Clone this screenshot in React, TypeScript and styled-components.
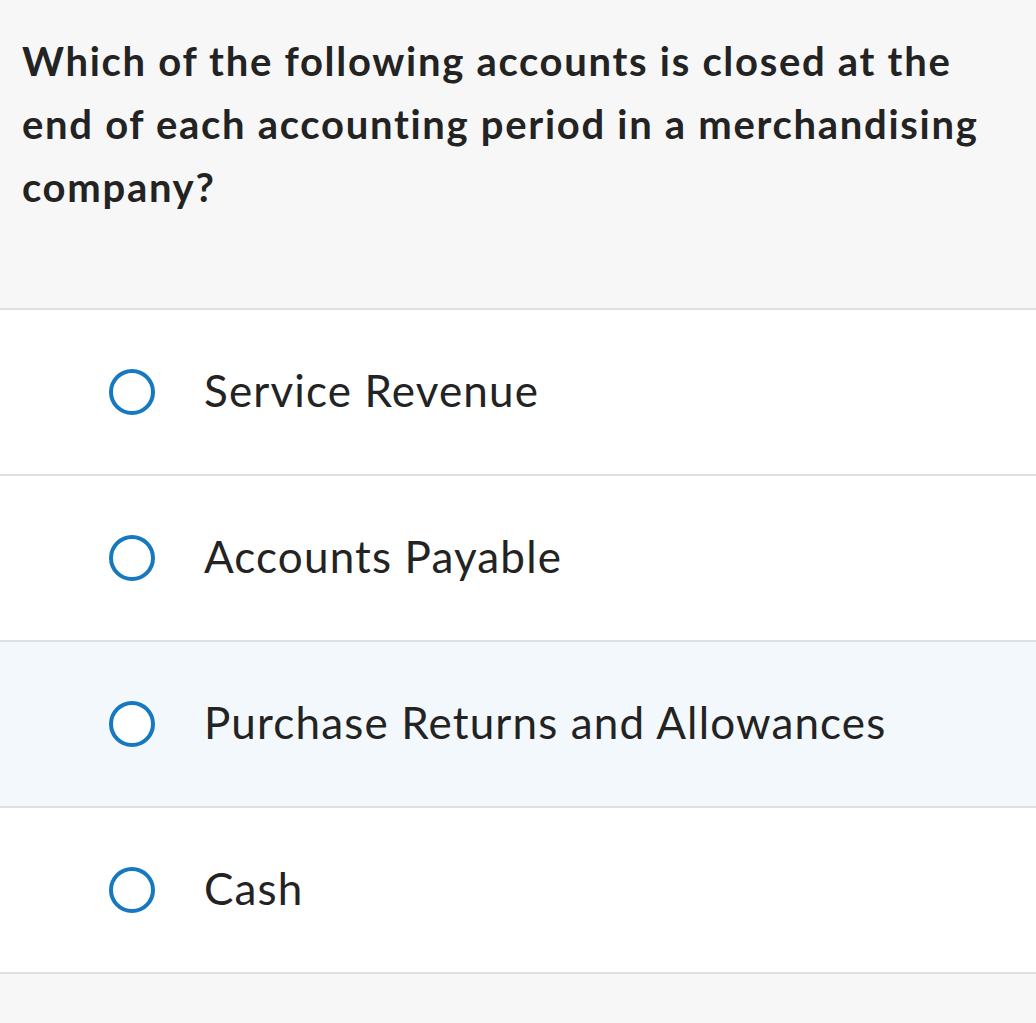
import React from "react";
import styled, { createGlobalStyle } from "styled-components";

const GlobalStyle = createGlobalStyle`
  html, body { margin: 0; padding: 0; background: #f7f7f7; }
  body { font-family: Lato, "Open Sans", sans-serif; color: #232323; }
`;

const Page = styled.div`
  width: 1036px;
  min-height: 1023px;
  background: #f7f7f7;
  display: flex;
  flex-direction: column;
`;

const Question = styled.h1`
  margin: 0;
  box-sizing: border-box;
  height: 308px;
  padding: 30px 28px 0 22px;
  font-size: 40px;
  font-weight: 700;
  line-height: 63px;
  letter-spacing: 1.7px;
  color: #232323;
`;

const Options = styled.ul`
  list-style: none;
  margin: 0;
  padding: 0;
  border-bottom: 2px solid #dedee3;
`;

const Option = styled.li<{ $highlight?: boolean }>`
  box-sizing: border-box;
  height: 166px;
  border-top: 2px solid #dedee3;
  background: ${(p) => (p.$highlight ? "#f2f8fc" : "#ffffff")};
  display: flex;
  align-items: center;
  padding-left: 109px;
  gap: 49px;
`;

const Radio = styled.span`
  box-sizing: border-box;
  width: 46px;
  height: 46px;
  border-radius: 50%;
  border: 4.5px solid #1679c0;
  background: #ffffff;
  flex: none;
`;

const Label = styled.span`
  font-size: 44px;
  font-weight: 400;
  letter-spacing: 1.15px;
  color: #232323;
  margin-top: -4px;
`;

const options = [
  "Service Revenue",
  "Accounts Payable",
  "Purchase Returns and Allowances",
  "Cash",
];

export default function App() {
  return (
    <Page>
      <GlobalStyle />
      <Question>
        Which of the following accounts is closed at the end of each accounting period in a merchandising company?
      </Question>
      <Options>
        {options.map((o, i) => (
          <Option key={o} $highlight={i === 2}>
            <Radio />
            <Label>{o}</Label>
          </Option>
        ))}
      </Options>
    </Page>
  );
}
